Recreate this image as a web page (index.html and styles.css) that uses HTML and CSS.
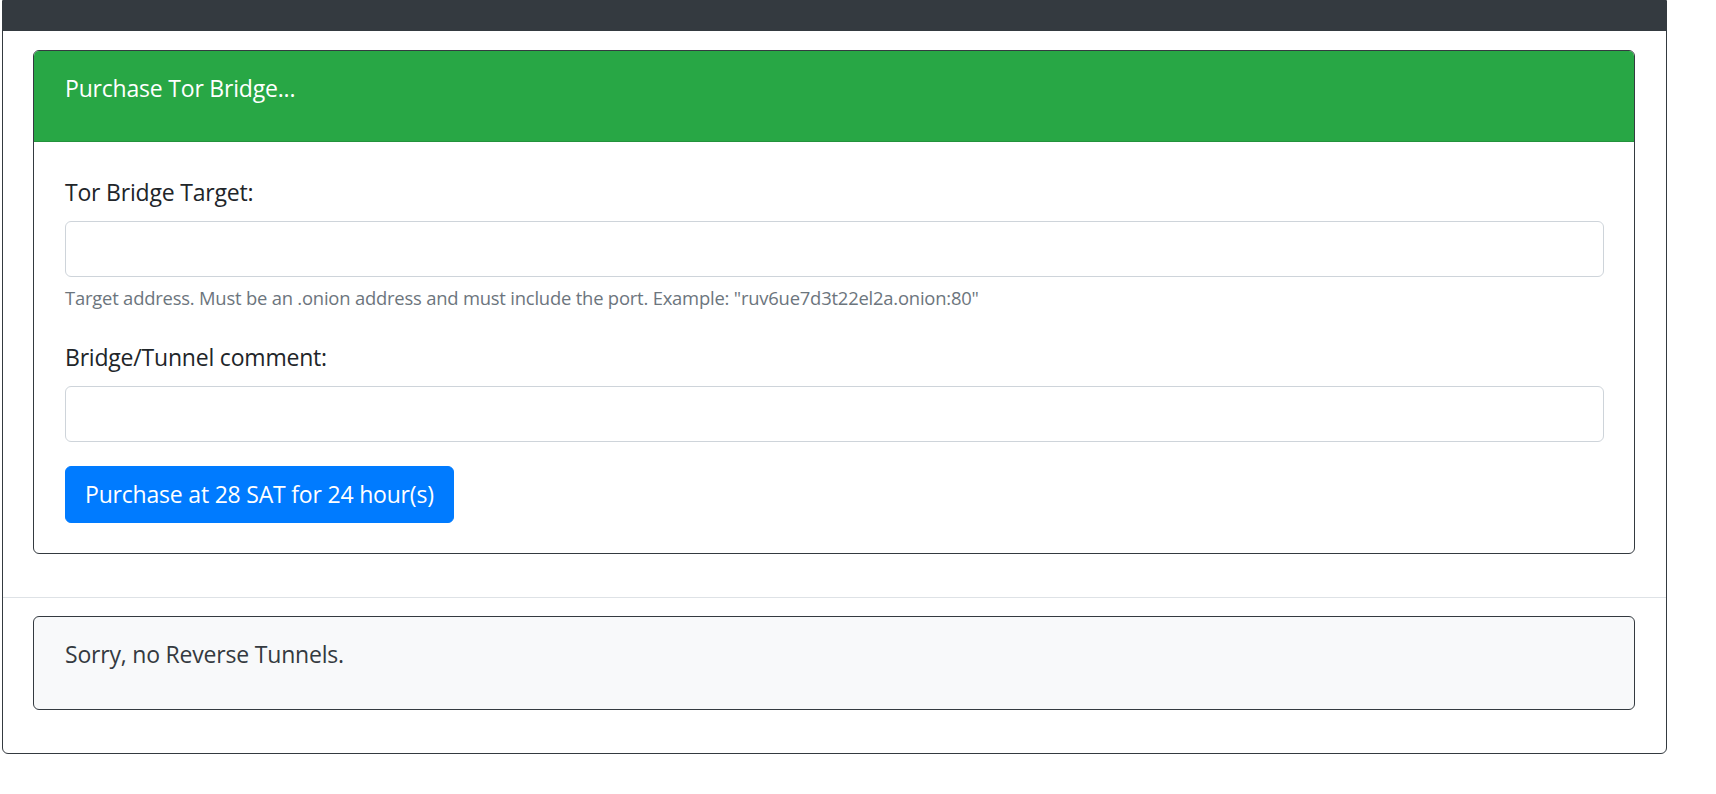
FILE: index.html
```html
<!DOCTYPE html>
<html lang="en">
<head>
<meta charset="utf-8">
<title>Purchase Tor Bridge</title>
<link rel="stylesheet" href="styles.css">
</head>
<body>
<div class="outer-card">
  <div class="outer-header"></div>
  <div class="section">
    <div class="card">
      <div class="card-header-green">Purchase Tor Bridge...</div>
      <div class="card-body">
        <div class="form-group">
          <label class="label" for="target">Tor Bridge Target:</label>
          <input class="input" id="target" type="text">
          <div class="help">Target address. Must be an .onion address and must include the port. Example: "ruv6ue7d3t22el2a.onion:80"</div>
        </div>
        <div class="form-group">
          <label class="label" for="comment">Bridge/Tunnel comment:</label>
          <input class="input" id="comment" type="text">
        </div>
        <button class="btn" type="button">Purchase at 28 SAT for 24 hour(s)</button>
      </div>
    </div>
  </div>
  <div class="section section-sep">
    <div class="card card-light">
      <div class="light-body">Sorry, no Reverse Tunnels.</div>
    </div>
  </div>
</div>
</body>
</html>
```
FILE: styles.css
```css
html, body {
  margin: 0;
  padding: 0;
  background: #ffffff;
}
body {
  font-family: "Open Sans", "Noto Sans", "Liberation Sans", sans-serif;
  font-size: 23px;
  letter-spacing: -0.2px;
  line-height: 36px;
  color: #212529;
}
.outer-card {
  box-sizing: border-box;
  margin-left: 2px;
  width: 1665px;
  border: 1px solid #343a40;
  border-radius: 0 0 6px 6px;
  background: #ffffff;
}
.outer-header {
  height: 30px;
  background: #343a40;
}
.section {
  padding: 19px 31px 43px 30px;
}
.section-sep {
  border-top: 1px solid #dee2e6;
  padding-top: 18px;
}
.card {
  border: 1px solid #343a40;
  border-radius: 6px;
  background: #ffffff;
  overflow: hidden;
}
.card-header-green {
  background: #28a745;
  color: #ffffff;
  padding: 19px 30px 35px 31px;
  border-bottom: 1px solid rgba(0, 0, 0, 0.125);
}
.card-body {
  padding: 32px 30px 30px 31px;
}
.form-group {
  margin-bottom: 24px;
}
.form-group:first-child {
  margin-bottom: 26px;
}
.label {
  display: block;
  margin-bottom: 11px;
}
.input {
  display: block;
  box-sizing: border-box;
  width: 100%;
  height: 56px;
  margin: 0;
  border: 1px solid #ced4da;
  border-radius: 6px;
  background: #ffffff;
  font: inherit;
  padding: 0 18px;
}
.help {
  margin-top: 7px;
  font-size: 18.4px;
  line-height: 28.8px;
  color: #6c757d;
}
.btn {
  display: inline-block;
  margin: 0;
  border: 1px solid #007bff;
  border-radius: 6px;
  background: #007bff;
  color: #ffffff;
  font: inherit;
  letter-spacing: -0.2px;
  line-height: 36px;
  padding: 9.5px 19px;
  cursor: pointer;
}
.card-light {
  background: #f8f9fa;
}
.light-body {
  padding: 19px 31px 37px 31px;
  color: #343a40;
}
```
